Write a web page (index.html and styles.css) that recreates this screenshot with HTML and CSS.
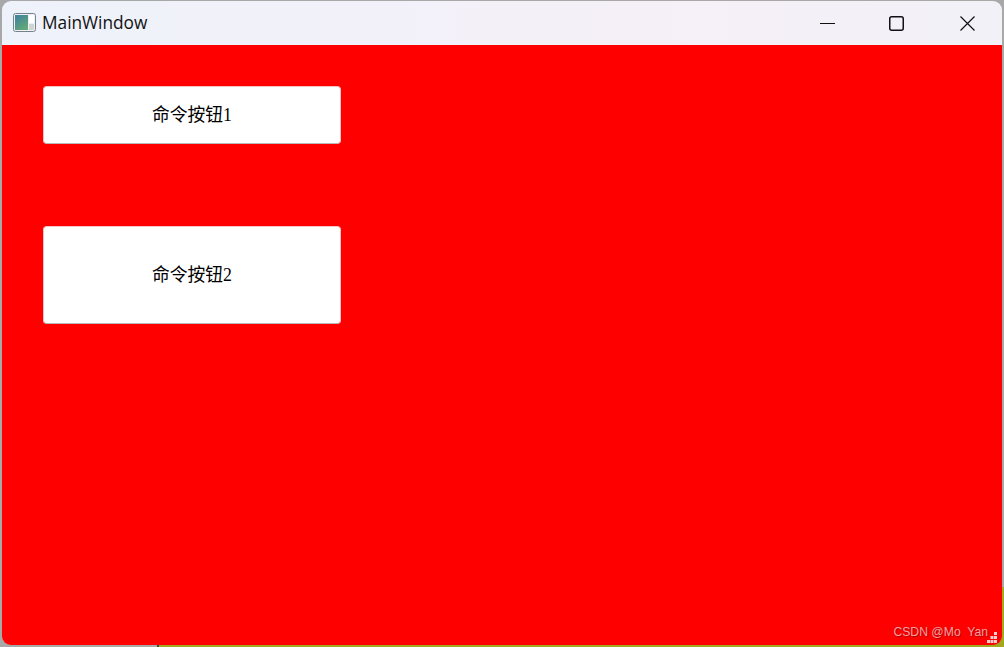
FILE: index.html
```html
<!DOCTYPE html>
<html lang="en">

<head>
    <meta charset="UTF-8">
    <meta name="viewport" content="width=device-width, initial-scale=1.0">
    <title>MainWindow</title>
    <link rel="stylesheet" href="styles.css">
</head>

<body>
    <div class="window">
        <div class="title-bar">
            <svg class="app-icon" width="24" height="20" viewBox="0 0 24 20">
                <defs>
                    <linearGradient id="pane" x1="0" y1="0" x2="0.6" y2="1">
                        <stop offset="0" stop-color="#3f7fa0" />
                        <stop offset="1" stop-color="#62a878" />
                    </linearGradient>
                </defs>
                <rect x="0.5" y="0.5" width="22" height="18" rx="2" fill="#eef1f4" stroke="#78828c" />
                <rect x="2" y="2" width="13" height="15" fill="url(#pane)" />
                <rect x="16" y="2" width="5" height="8" fill="#fff" />
                <rect x="16" y="11" width="5" height="6" fill="#cfd6d2" />
            </svg>
            <span class="title">MainWindow</span>
            <div class="controls">
                <button class="control">
                    <svg width="15" height="15" viewBox="0 0 15 15">
                        <path d="M0 7.500h15" stroke="#111" fill="none" />
                    </svg>
                </button>
                <button class="control control-max">
                    <svg width="15" height="15" viewBox="0 0 15 15">
                        <rect x="0.750" y="0.750" width="13.500" height="13.500" rx="2" stroke="#111" stroke-width="1.500" fill="none" />
                    </svg>
                </button>
                <button class="control">
                    <svg width="15" height="15" viewBox="0 0 15 15">
                        <path d="M0.500 0.500l14 14M14.500 0.500l-14 14" stroke="#111" stroke-width="1.200" fill="none" />
                    </svg>
                </button>
            </div>
        </div>
        <div class="content">
            <button class="cmd cmd-small"><span class="cmd-label">命令按钮1</span></button>
            <button class="cmd cmd-large"><span class="cmd-label">命令按钮2</span></button>
            <span class="watermark">CSDN @Mo&nbsp; Yan</span>
            <svg class="grip" width="11" height="11" viewBox="0 0 11 11">
                <path d="M7 0h3v3H7zM3.500 4h3v3h-3zM7 4h3v3H7zM0 8h3v3H0zM3.500 8h3v3h-3zM7 8h3v3H7z" fill="#f3d0d0" />
            </svg>
        </div>
    </div>
</body>

</html>
```

FILE: styles.css
```css
html,
body {
    margin: 0;
    height: 100%;
}

body {
    overflow: hidden;
    background: linear-gradient(to right, #a8a8a8 157px, #444 157px, #444 159px, #a3a820 159px) bottom / 100% 60px no-repeat, #a8a8a8;
    font-family: "Liberation Sans", sans-serif;
}

.window {
    display: flex;
    flex-direction: column;
    height: 645px;
    margin: 0 2px;
    padding-top: 1px;
    box-sizing: border-box;
}

.title-bar {
    display: flex;
    align-items: center;
    flex-shrink: 0;
    height: 44px;
    padding-left: 11px;
    border-radius: 9px 9px 0 0;
    background: linear-gradient(to right, #eef2fa, #f6f0f8 70%, #f2f1f8);
}

.app-icon {
    margin-right: 5px;
}

.title {
    position: relative;
    top: -1px;
    font-family: "Open Sans", "Liberation Sans", sans-serif;
    font-size: 17.3px;
    color: #111;
}

.controls {
    display: flex;
    margin-left: auto;
}

.control {
    display: flex;
    align-items: center;
    justify-content: center;
    width: 70px;
    height: 44px;
    padding: 0;
    border: 0;
    background: none;
}

.control-max svg {
    margin-right: 2px;
}

.content {
    position: relative;
    display: flex;
    flex: 1;
    flex-direction: column;
    align-items: flex-start;
    gap: 82px;
    padding: 41px;
    border-radius: 0 0 9px 9px;
    background: #f00;
}

.cmd {
    display: flex;
    align-items: center;
    justify-content: center;
    width: 298px;
    padding: 0;
    border: 1px solid #f4c4c4;
    border-bottom-color: #b9b9b9;
    border-radius: 4px;
    background: #fff;
    font-family: "Liberation Serif", "Noto Sans CJK SC", serif;
    font-size: 17.8px;
    font-weight: 400;
    color: #000;
}

.cmd-label {
    line-height: 20px;
    margin-top: -1px;
}

.cmd-small {
    height: 58px;
}

.cmd-large {
    height: 98px;
}

.watermark {
    position: absolute;
    right: 14px;
    bottom: 6px;
    font-size: 12.2px;
    color: #f0a0a0;
    text-shadow: 1px 1px 1px #b00000;
}

.grip {
    position: absolute;
    right: 4px;
    bottom: 2px;
}
```
